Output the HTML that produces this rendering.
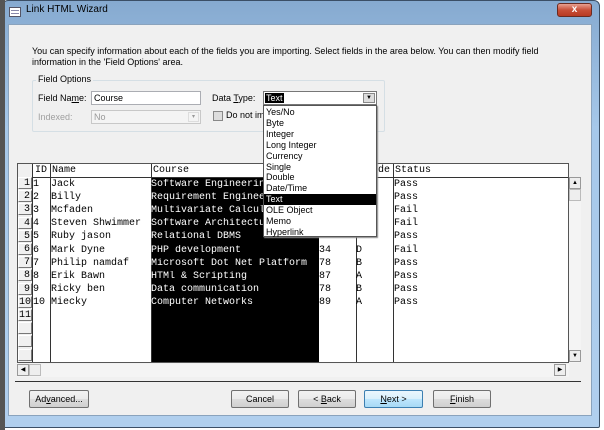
<!DOCTYPE html>
<html><head><style>
*{margin:0;padding:0;box-sizing:border-box}
body{width:604px;height:430px;overflow:hidden;background:#fff;font-family:"Liberation Sans",sans-serif;font-size:9px;position:relative}
.a{position:absolute}
.m{font-family:"Liberation Mono",monospace;font-size:10px;white-space:nowrap}
.btn{position:absolute;top:390px;height:18px;border:1px solid #707070;border-radius:2px;background:linear-gradient(#f2f2f2,#ebebeb 50%,#dddddd 51%,#cfcfcf);font-size:9px;text-align:center;line-height:16px;color:#000}
</style></head><body>
<div class="a" style="left:2px;top:0;width:598px;height:428px;background:linear-gradient(#86aad0,#a6c8ea 30%,#b0cfee);border:1px solid #3b4f66;border-radius:6px 6px 2px 2px"></div>
<div class="a" style="left:0;top:0;width:5px;height:430px;background:#555"></div>
<div class="a" style="left:26px;top:4px;font-size:10px;color:#000">Link HTML Wizard</div>
<div class="a" style="left:9px;top:7px;width:12px;height:10px;border:1px solid #556;background:#fff"><div style="margin:2px 1px;height:1px;background:#88a"></div><div style="margin:1px 1px;height:1px;background:#88a"></div></div>
<div class="a" style="left:557px;top:3px;width:35px;height:14px;border-radius:3px;border:1px solid #6a2a20;background:linear-gradient(#e8a090,#c84f38 50%,#b83a22);color:#fff;text-align:center;font-size:10px;font-weight:bold;line-height:12px">x</div>
<div class="a" style="left:8px;top:24px;width:584px;height:392px;background:#f0f0f0;border:1px solid #8aa3bd"></div>
<div class="a" style="left:32px;top:46px;line-height:11px;width:540px">You can specify information about each of the fields you are importing. Select fields in the area below. You can then modify field information in the 'Field Options' area.</div>
<div class="a" style="left:32px;top:80px;width:353px;height:52px;border:1px solid #d5dfe5;border-radius:2px"></div>
<div class="a" style="left:36px;top:74px;background:#f0f0f0;padding:0 2px">Field Options</div>
<div class="a" style="left:38px;top:93px">Field Na<u>m</u>e:</div>
<div class="a" style="left:91px;top:91px;width:110px;height:14px;border:1px solid #abadb3;background:#fff;padding:1px 2px">Course</div>
<div class="a" style="left:38px;top:112px;color:#a0a0a0">Indexed:</div>
<div class="a" style="left:91px;top:110px;width:110px;height:14px;border:1px solid #c8c8c8;background:#f4f4f4;padding:1px 2px;color:#999">No<span style="position:absolute;right:1px;top:1px;width:11px;height:10px;border:1px solid #ddd;font-size:6px;text-align:center">▾</span></div>
<div class="a" style="left:212px;top:93px">Data <u>T</u>ype:</div>
<div class="a" style="left:213px;top:111px;width:10px;height:10px;border:1px solid #888;background:#ddd"></div>
<div class="a" style="left:226px;top:110px">Do not imp</div>
<div class="a" style="left:17px;top:163px;width:552px;height:200px;border:1px solid #555;background:#fff;overflow:hidden">
 <div class="a" style="left:0;top:0;width:15px;height:200px;background:#f0f0f0;border-right:1px solid #333"></div>
 <div class="a" style="left:133px;top:14px;width:168px;height:186px;background:#000"></div>
 <div class="a" style="left:0;top:0;width:552px;height:14px;border-bottom:1px solid #333;background:#fff"></div>
 <div class="a" style="left:0;top:0;width:15px;height:14px;background:#f0f0f0;border-right:1px solid #333"></div>
 <div class="a" style="left:32px;top:0;width:1px;height:200px;background:#333"></div>
 <div class="a" style="left:133px;top:0;width:1px;height:200px;background:#333"></div>
 <div class="a" style="left:301px;top:0;width:1px;height:14px;background:#333"></div>
 <div class="a" style="left:338px;top:0;width:1px;height:200px;background:#333"></div>
 <div class="a" style="left:375px;top:0;width:1px;height:200px;background:#333"></div>
 <div class="a m" style="left:17px;top:1px">ID</div>
 <div class="a m" style="left:34px;top:1px">Name</div>
 <div class="a m" style="left:135px;top:1px">Course</div>
 <div class="a m" style="left:360px;top:1px">de</div>
 <div class="a m" style="left:377px;top:1px">Status</div>
</div>
<div class="a" id="rows" style="left:17px;top:177px"></div>
<script>
var d=[["1","Jack","Software Engineering","","","Pass"],["2","Billy","Requirement Engineering","","","Pass"],["3","Mcfaden","Multivariate Calculus","","","Fail"],["4","Steven Shwimmer","Software Architecture","","","Fail"],["5","Ruby jason","Relational DBMS","","","Pass"],["6","Mark Dyne","PHP development","34","D","Fail"],["7","Philip namdaf","Microsoft Dot Net Platform","78","B","Pass"],["8","Erik Bawn","HTMl & Scripting","87","A","Pass"],["9","Ricky ben","Data communication","78","B","Pass"],["10","Miecky","Computer Networks","89","A","Pass"]];
var h="";
for(var i=0;i<14;i++){var y=i*13.2;var t=y+1.5;
h+='<div class="a" style="left:1px;top:'+(y)+'px;width:14px;height:12px;background:#f0f0f0;border:1px solid #fff;border-right-color:#777;border-bottom-color:#777;font-size:10px;text-align:right;padding-right:1px;line-height:12px;font-family:Liberation Mono,monospace">'+(i<11?i+1:'')+'</div>';
if(i<10){var r=d[i];
h+='<div class="a m" style="left:16px;top:'+t+'px">'+r[0]+'</div><div class="a m" style="left:34px;top:'+t+'px">'+r[1]+'</div><div class="a m" style="left:134px;top:'+t+'px;color:#fff;width:167px;overflow:hidden">'+r[2].replace('&','&amp;')+'</div><div class="a m" style="left:302px;top:'+t+'px">'+r[3]+'</div><div class="a m" style="left:339px;top:'+t+'px">'+r[4]+'</div><div class="a m" style="left:377px;top:'+t+'px">'+r[5]+'</div>';}}
document.getElementById('rows').innerHTML=h;
</script>
<div class="a" style="left:569px;top:177px;width:12px;height:186px;background:#f4f4f4"></div>
<div class="a" style="left:569px;top:177px;width:12px;height:12px;border:1px solid #999;background:#eee;font-size:6px;text-align:center;line-height:10px">▲</div>
<div class="a" style="left:569px;top:189px;width:12px;height:12px;border:1px solid #bbb;background:#eee"></div>
<div class="a" style="left:569px;top:350px;width:12px;height:12px;border:1px solid #999;background:#eee;font-size:6px;text-align:center;line-height:10px">▼</div>
<div class="a" style="left:17px;top:364px;width:552px;height:13px;background:#f4f4f4"></div>
<div class="a" style="left:17px;top:364px;width:12px;height:12px;border:1px solid #999;background:#eee;font-size:6px;text-align:center;line-height:10px">◀</div>
<div class="a" style="left:29px;top:364px;width:12px;height:12px;border:1px solid #bbb;background:#eee"></div>
<div class="a" style="left:554px;top:364px;width:12px;height:12px;border:1px solid #999;background:#eee;font-size:6px;text-align:center;line-height:10px">▶</div>
<div class="a" style="left:15px;top:381px;width:566px;height:1px;background:#333"></div>
<div class="btn" style="left:29px;width:60px">Ad<u>v</u>anced...</div>
<div class="btn" style="left:231px;width:58px">Cancel</div>
<div class="btn" style="left:298px;width:58px">&lt; <u>B</u>ack</div>
<div class="btn" style="left:364px;width:59px;border-color:#3c7fb1;background:linear-gradient(#eaf6fd,#d9f0fc 50%,#bee6fd 51%,#a7d9f5)"><u>N</u>ext &gt;</div>
<div class="btn" style="left:433px;width:58px"><u>F</u>inish</div>
<div class="a" style="left:263px;top:91px;width:114px;height:14px;border:1px solid #777;background:#fff"><span style="position:absolute;left:1px;top:1px;background:#000;color:#fff;padding:0 1px;line-height:10px">Text</span><span style="position:absolute;right:1px;top:1px;width:12px;height:10px;border:1px solid #888;background:#ddd;font-size:6px;text-align:center;line-height:9px">▼</span></div>
<div class="a" style="left:263px;top:105px;width:114px;height:132px;border:1px solid #555;background:#fff;line-height:10.9px;padding-top:1px;box-shadow:1px 1px 1px #888">
<div style="padding-left:2px">Yes/No</div><div style="padding-left:2px">Byte</div><div style="padding-left:2px">Integer</div><div style="padding-left:2px">Long Integer</div><div style="padding-left:2px">Currency</div><div style="padding-left:2px">Single</div><div style="padding-left:2px">Double</div><div style="padding-left:2px">Date/Time</div><div style="padding-left:2px;background:#000;color:#fff">Text</div><div style="padding-left:2px">OLE Object</div><div style="padding-left:2px">Memo</div><div style="padding-left:2px">Hyperlink</div>
</div>
</body></html>
